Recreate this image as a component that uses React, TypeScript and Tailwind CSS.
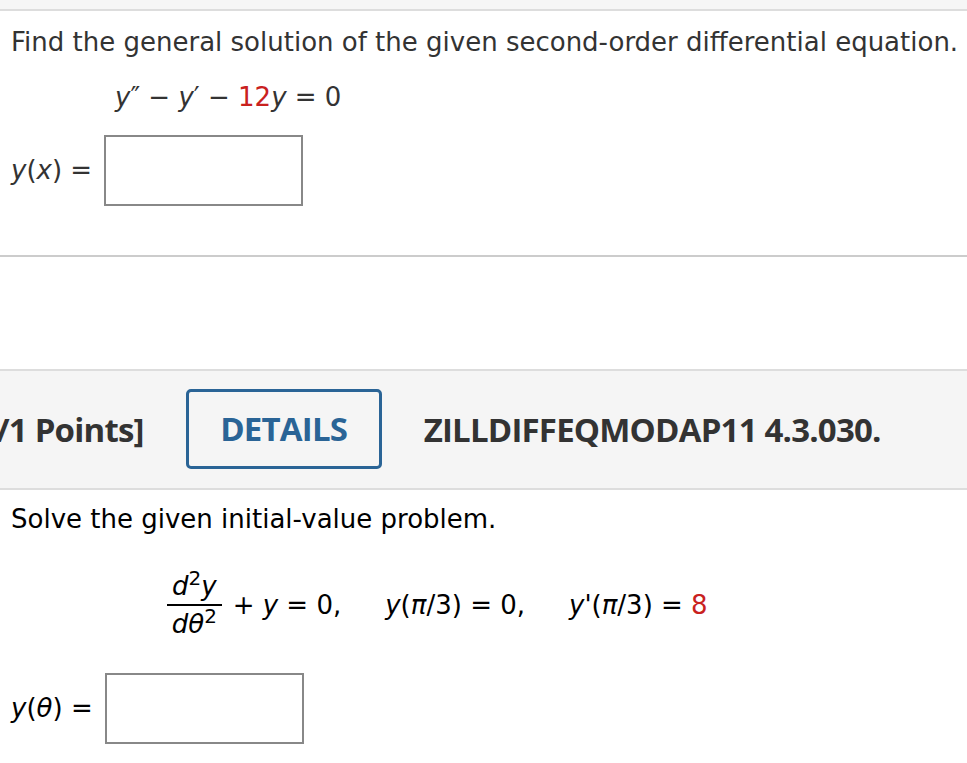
export default function App() {
  return (
    <div className="min-h-[763px] w-[967px] overflow-hidden bg-white font-['DejaVu_Sans',sans-serif] text-[#333]">
      <div className="h-[11px] border-b-2 border-[#ddd] bg-[#f6f6f6]" />

      <div className="pl-[11px] pt-[13px]">
        <p className="whitespace-nowrap text-[26px] leading-[36px]">
          Find the general solution of the given second-order differential equation.
        </p>
        <div className="mt-[19px] whitespace-pre pl-[104px] text-[26px] leading-[36px]">
          <i>y</i>″ − <i>y</i>′ − <span className="text-[#c9211e]">12</span>
          <i>y</i> = 0
        </div>
        <div className="mt-[20px] flex items-center gap-[12px] text-[26px]">
          <span>
            <i>y</i>(<i>x</i>) =
          </span>
          <div className="h-[71px] w-[199px] border-2 border-[#888] bg-white" />
        </div>
      </div>

      <div className="mt-[49px] h-[2px] bg-[#ccc]" />

      <div className="mt-[112px] flex h-[121px] items-center border-y-2 border-[#ddd] bg-[#f5f5f5] font-['Open_Sans',sans-serif] text-[33px] font-bold tracking-[-0.8px] text-[#333]">
        <span className="ml-[-4px] whitespace-nowrap">/1 Points]</span>
        <button className="ml-[42px] mb-[1px] h-[80px] w-[196px] shrink-0 rounded-[5px] border-[3px] border-[#2a6496] tracking-[-0.8px] text-[#2a6496]">
          DETAILS
        </button>
        <span className="ml-[42px] whitespace-nowrap">ZILLDIFFEQMODAP11 4.3.030.</span>
      </div>

      <div className="pl-[11px] pt-[11px] text-black">
        <p className="text-[26px] leading-[36px]">Solve the given initial-value problem.</p>
        <div className="mt-[31px] flex items-center pl-[156px] text-[26px]">
          <div className="flex flex-col items-center">
            <span className="border-b-2 border-black px-[5px] leading-[36px]">
              <i>d</i>
              <sup className="text-[20px]">2</sup>
              <i>y</i>
            </span>
            <span className="leading-[36px]">
              <i>dθ</i>
              <sup className="text-[20px]">2</sup>
            </span>
          </div>
          <span className="ml-[11px] whitespace-nowrap">
            + <i>y</i> = 0,
          </span>
          <span className="ml-[44px] whitespace-nowrap">
            <i>y</i>(<i>π</i>/3) = 0,
          </span>
          <span className="ml-[44px] whitespace-nowrap">
            <i>y</i>'(<i>π</i>/3) = <span className="text-[#c9211e]">8</span>
          </span>
        </div>
        <div className="mt-[31px] flex items-center gap-[12px] text-[26px]">
          <span>
            <i>y</i>(<i>θ</i>) =
          </span>
          <div className="h-[71px] w-[199px] border-2 border-[#888] bg-white" />
        </div>
      </div>
    </div>
  );
}
